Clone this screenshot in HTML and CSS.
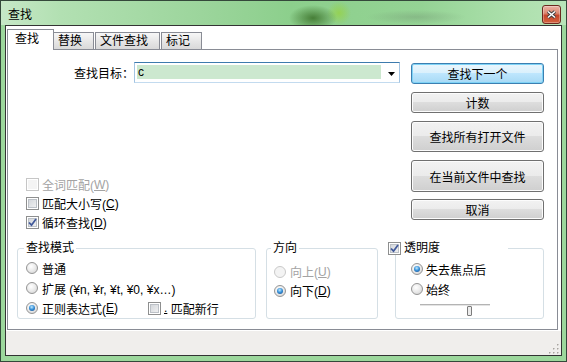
FILE: index.html
```html
<!DOCTYPE html>
<html>
	<head>
		<meta charset="UTF-8">
		<title>查找</title>
		<link rel="stylesheet" href="styles.css">
	</head>
	<body>
		<div class="win">
			<div class="caption">
				<span class="caption-text">查找</span>
				<span class="close">
					<svg width="11" height="9" viewBox="0 0 11 9"><path d="M2 1.5L9 7.5M9 1.5L2 7.5" stroke="#3a3a3a" stroke-width="3.4"/><path d="M2 1.5L9 7.5M9 1.5L2 7.5" stroke="#fff" stroke-width="1.6"/></svg>
				</span>
			</div>
			<div class="client">
				<div class="sheet">
					<div class="tabs">
						<span class="tab on">查找</span>
						<span class="tab">替换</span>
						<span class="tab">文件查找</span>
						<span class="tab">标记</span>
					</div>
					<div class="panel">
						<div class="top">
							<div class="left">
								<div class="find">
									<span>查找目标：</span>
									<div class="combo">
										<span class="combo-val">c</span>
										<span class="drop"><svg width="7" height="4" viewBox="0 0 7 4"><path d="M0 0H7L3.5 4Z" fill="#000"/></svg></span>
									</div>
								</div>
								<div class="opts">
									<div class="check dis"><span class="box"></span>全词匹配(<u>W</u>)</div>
									<div class="check"><span class="box"></span>匹配大小写(<u>C</u>)</div>
									<div class="check"><span class="box"><svg width="9" height="9" viewBox="0 0 9 9"><path d="M1 4.5L3.5 7.2L8 1" fill="none" stroke="#41599a" stroke-width="1.8"/></svg></span>循环查找(<u>D</u>)</div>
								</div>
							</div>
							<div class="btns">
								<div class="btn def">查找下一个</div>
								<div class="btn">计数</div>
								<div class="btn tall">查找所有打开文件</div>
								<div class="btn taller">在当前文件中查找</div>
								<div class="btn last">取消</div>
							</div>
						</div>
						<div class="groups">
							<div class="grp mode">
								<span class="grp-title">查找模式</span>
								<div class="opt"><span class="dot"></span>普通</div>
								<div class="opt"><span class="dot"></span>扩展 (¥n, ¥r, ¥t, ¥0, ¥x…)</div>
								<div class="opt">
									<span class="wide"><span class="dot on"></span>正则表达式(<u>E</u>)</span>
									<span class="check"><span class="box"></span><u>.</u>&nbsp;匹配新行</span>
								</div>
							</div>
							<div class="grp dir">
								<span class="grp-title">方向</span>
								<div class="opt dis"><span class="dot"></span>向上(<u>U</u>)</div>
								<div class="opt"><span class="dot on"></span>向下(<u>D</u>)</div>
							</div>
							<div class="grp alpha">
								<span class="grp-title"><span class="box"><svg width="9" height="9" viewBox="0 0 9 9"><path d="M1 4.5L3.5 7.2L8 1" fill="none" stroke="#41599a" stroke-width="1.8"/></svg></span>透明度</span>
								<div class="opt"><span class="dot on"></span>失去焦点后</div>
								<div class="opt"><span class="dot"></span>始终</div>
								<div class="slider"><div class="track"></div><span class="thumb"></span></div>
							</div>
						</div>
					</div>
				</div>
				<div class="status">
					<svg width="10" height="10" viewBox="0 0 10 10">
						<g fill="#fff"><rect x="9" y="1" width="1" height="1"/><rect x="5" y="5" width="1" height="1"/><rect x="9" y="5" width="1" height="1"/><rect x="1" y="9" width="1" height="1"/><rect x="5" y="9" width="1" height="1"/><rect x="9" y="9" width="1" height="1"/></g>
						<g fill="#a8a4a0"><rect x="8" y="0" width="1.5" height="1.5"/><rect x="4" y="4" width="1.5" height="1.5"/><rect x="8" y="4" width="1.5" height="1.5"/><rect x="0" y="8" width="1.5" height="1.5"/><rect x="4" y="8" width="1.5" height="1.5"/><rect x="8" y="8" width="1.5" height="1.5"/></g>
					</svg>
				</div>
			</div>
		</div>
	</body>
</html>
```

FILE: styles.css
```css
*{
	margin: 0;
	padding: 0;
	box-sizing: border-box;
}
body{
	font: 12px "Liberation Sans", "Noto Sans CJK SC", sans-serif;
	color: #000;
}
u{
	text-decoration: underline;
}
/* 窗口外框 */
.win{
	width: 567px;
	height: 362px;
	border: 1px solid #34483a;
	background: #9cd79c;
	padding: 0 4px 5px;
	display: flex;
	flex-direction: column;
}
.caption{
	height: 24px;
	margin: 0 -4px;
	padding: 0 5px 0 7px;
	display: flex;
	justify-content: space-between;
	align-items: flex-start;
	background:
		radial-gradient(ellipse 24px 13px at 312px 17px, rgba(58,112,40,.85), rgba(58,112,40,0)),
		radial-gradient(ellipse 12px 12px at 338px 12px, rgba(150,210,70,.8), rgba(150,210,70,0)),
		radial-gradient(ellipse 50px 7px at 415px 16px, rgba(110,140,110,.35), rgba(110,140,110,0)),
		linear-gradient(90deg, #c6e8c6 0, #b2e0b2 60px, #9cd59c 200px, #8ccf8c 290px, #94d394 420px, #ace0ac 510px, #b9e4b9 567px);
}
.caption-text{
	margin-top: 6px;
	line-height: 16px;
}
.close{
	margin-top: 4px;
	width: 19px;
	height: 19px;
	border: 1px solid #6b2a1e;
	border-radius: 3px;
	background: linear-gradient(#eab3a5, #dc8a73 42%, #c6472b 56%, #d3633f);
	box-shadow: inset 0 0 0 1px rgba(255,255,255,.3);
	display: flex;
	align-items: center;
	justify-content: center;
}
.client{
	flex: 1;
	border: 1px solid #333;
	background: #fff;
	display: flex;
	flex-direction: column;
}
.sheet{
	flex: 1;
	padding: 3px 3px 1px 1px;
	display: flex;
	flex-direction: column;
}
/* 标签页 */
.tabs{
	display: flex;
	align-items: flex-end;
	height: 20px;
	position: relative;
	z-index: 1;
}
.tab{
	height: 17px;
	line-height: 16px;
	padding: 0 11px 0 4px;
	margin-left: 1px;
	border: 1px solid #898c95;
	border-bottom: 0;
	background: linear-gradient(#f7f7f7, #e4e4e4 60%, #d9d9d9);
}
.tab.on{
	height: 21px;
	line-height: 19px;
	margin: 0 0 -1px;
	padding: 0 14px 0 7px;
	background: #fff;
}
.tab.on + .tab{
	margin-left: -1px;
}
.panel{
	flex: 1;
	border: 1px solid #898c95;
}
.top{
	display: flex;
	padding: 12px 13px 0 0;
}
.left{
	flex: 1;
}
.find{
	display: flex;
	align-items: center;
	height: 21px;
	padding-left: 66px;
}
.combo{
	flex: 1;
	height: 21px;
	display: flex;
	align-items: flex-start;
	padding: 2px 0 0 2px;
	border: 1px solid;
	border-color: #3d7bad #a3c4e2 #c3dbef #a3c4e2;
}
.combo-val{
	flex: 1;
	height: 14px;
	line-height: 14px;
	padding-left: 1px;
	background: #cce8cf;
}
.drop{
	width: 18px;
	height: 17px;
	padding-left: 3px;
	display: flex;
	align-items: center;
	justify-content: center;
}
.drop svg{
	display: block;
}
/* 右侧按钮 */
.btns{
	width: 133px;
	margin: 1px 0 0 11px;
	display: flex;
	flex-direction: column;
}
.btn{
	height: 21px;
	margin-top: 8px;
	border: 1px solid #707070;
	border-radius: 3px;
	background: linear-gradient(#f2f2f2, #ebebeb 50%, #dddddd 50%, #cfcfcf);
	box-shadow: inset 0 0 0 1px #fcfcfc;
	display: flex;
	align-items: center;
	justify-content: center;
}
.btn.def{
	margin-top: 0;
	border-color: #3c7fb1;
	background: linear-gradient(#eaf6fd, #d9f0fc 50%, #bee6fd 50%, #a7d9f5);
	box-shadow: inset 0 0 0 1px #7fd3f6;
}
.btn.tall{
	height: 31px;
}
.btn.taller{
	height: 32px;
}
.btn.last{
	margin-top: 7px;
}
/* 复选框 */
.opts{
	margin-top: 92px;
	padding-left: 18px;
}
.check{
	display: flex;
	align-items: center;
	height: 19px;
}
.box{
	width: 13px;
	height: 13px;
	flex: none;
	margin-right: 3px;
	border: 1px solid #8e8f8f;
	background: linear-gradient(135deg, #cdd1d6, #f6f6f6);
	box-shadow: inset 0 0 0 1px #fff, inset 0 0 0 2px #bcc1c7;
	display: flex;
	align-items: center;
	justify-content: center;
}
.box svg{
	display: block;
	flex: none;
}
.dis{
	color: #a3a3a3;
}
.dis .box{
	border-color: #c6c6c6;
	background: #f4f4f4;
	box-shadow: inset 0 0 0 1px #fff;
}
/* 分组框 */
.groups{
	display: flex;
	margin-top: 16px;
	padding-left: 9px;
}
.grp{
	position: relative;
	height: 71px;
	border: 1px solid #d5dfe5;
	border-radius: 3px;
}
.grp-title{
	position: absolute;
	top: -7px;
	left: 6px;
	padding: 0 2px;
	line-height: 13px;
	background: #fff;
	display: flex;
	align-items: center;
}
.mode{
	width: 239px;
	padding: 9px 0 0 8px;
}
.dir{
	width: 112px;
	margin-left: 10px;
	padding: 13px 0 0 7px;
}
.dir .grp-title{
	left: 4px;
}
.alpha{
	width: 149px;
	margin-left: 17px;
	padding: 10px 0 0 15px;
}
.alpha .grp-title{
	left: -8px;
	width: 120px;
	height: 13px;
	padding: 0;
}
.opt{
	display: flex;
	align-items: center;
	height: 20px;
}
.dir .opt{
	height: 19px;
}
.wide{
	width: 122px;
	display: flex;
	align-items: center;
}
.dot{
	width: 12px;
	height: 12px;
	flex: none;
	margin-right: 4px;
	border-radius: 50%;
	border: 1px solid #949494;
	background: radial-gradient(circle at 40% 35%, #fff, #ececec 45%, #cfcfcf);
	display: flex;
	align-items: center;
	justify-content: center;
}
.dot.on::after{
	content: "";
	width: 6px;
	height: 6px;
	border-radius: 50%;
	background: radial-gradient(circle at 45% 35%, #c6ebfd, #3b95dc 45%, #0d3f80);
}
.dis .dot{
	border-color: #c9c9c9;
	background: #f3f3f3;
}
.alpha .dot{
	margin-right: 3px;
}
.slider{
	position: relative;
	width: 70px;
	height: 12px;
	margin-left: 9px;
}
.track{
	margin-top: 5px;
	height: 2px;
	border-top: 1px solid #b4b4b4;
	border-bottom: 1px solid #e4e4e4;
}
.thumb{
	position: absolute;
	left: 47px;
	top: 2px;
	width: 5px;
	height: 10px;
	border: 1px solid #7c7c7c;
	border-radius: 1px;
	background: #ececec;
}
.status{
	height: 24px;
	background: #f0eeec;
	display: flex;
	justify-content: flex-end;
	align-items: flex-end;
	padding: 0 2px 1px 0;
}
```
